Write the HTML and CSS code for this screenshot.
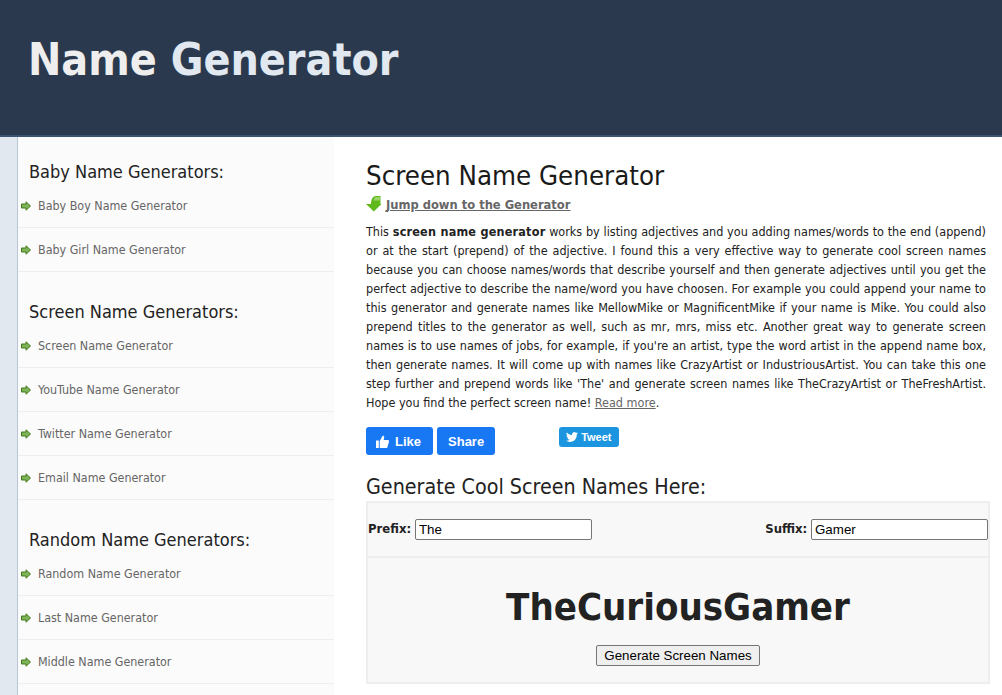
FILE: index.html
```html
<html lang="en">
<head>
	<meta charset="utf-8">
	<title>Screen Name Generator</title>
	<link rel="stylesheet" href="styles.css">
</head>
<body>
	<div class="header">
		<div class="site_title"><span class="title_first">Name</span> <span class="title_second">Generator</span></div>
	</div>
	<div class="page">
		<div class="strip"></div>
		<div class="sidebar">
			<h3>Baby Name Generators:</h3>
			<a class="side_link"><svg class="side_arrow" viewBox="0 0 10 10"><path d="M.5 3H5V.8L9.500 5 5 9.200V7H.5z"/></svg>Baby Boy Name Generator</a>
			<a class="side_link"><svg class="side_arrow" viewBox="0 0 10 10"><path d="M.5 3H5V.8L9.500 5 5 9.200V7H.5z"/></svg>Baby Girl Name Generator</a>
			<h3>Screen Name Generators:</h3>
			<a class="side_link"><svg class="side_arrow" viewBox="0 0 10 10"><path d="M.5 3H5V.8L9.500 5 5 9.200V7H.5z"/></svg>Screen Name Generator</a>
			<a class="side_link"><svg class="side_arrow" viewBox="0 0 10 10"><path d="M.5 3H5V.8L9.500 5 5 9.200V7H.5z"/></svg>YouTube Name Generator</a>
			<a class="side_link"><svg class="side_arrow" viewBox="0 0 10 10"><path d="M.5 3H5V.8L9.500 5 5 9.200V7H.5z"/></svg>Twitter Name Generator</a>
			<a class="side_link"><svg class="side_arrow" viewBox="0 0 10 10"><path d="M.5 3H5V.8L9.500 5 5 9.200V7H.5z"/></svg>Email Name Generator</a>
			<h3>Random Name Generators:</h3>
			<a class="side_link"><svg class="side_arrow" viewBox="0 0 10 10"><path d="M.5 3H5V.8L9.500 5 5 9.200V7H.5z"/></svg>Random Name Generator</a>
			<a class="side_link"><svg class="side_arrow" viewBox="0 0 10 10"><path d="M.5 3H5V.8L9.500 5 5 9.200V7H.5z"/></svg>Last Name Generator</a>
			<a class="side_link"><svg class="side_arrow" viewBox="0 0 10 10"><path d="M.5 3H5V.8L9.500 5 5 9.200V7H.5z"/></svg>Middle Name Generator</a>
		</div>
		<div class="content">
			<h1>Screen Name Generator</h1>
			<div class="jump">
				<svg class="jump_arrow" viewBox="0 0 16 16"><path class="jump_arrow_body" d="M5 8C5 3 7 0 10 0h4.500v8H15.500L7.800 15.500 0 8z"/><path class="jump_arrow_light" d="M9 1h5v3.500H7.500z"/></svg>
				<a>Jump down to the Generator</a>
			</div>
			<p class="intro">This <b>screen name generator</b> works by listing adjectives and you adding names/words to the end (append) or at the start (prepend) of the adjective. I found this a very effective way to generate cool screen names because you can choose names/words that describe yourself and then generate adjectives until you get the perfect adjective to describe the name/word you have choosen. For example you could append your name to this generator and generate names like MellowMike or MagnificentMike if your name is Mike. You could also prepend titles to the generator as well, such as mr, mrs, miss etc. Another great way to generate screen names is to use names of jobs, for example, if you're an artist, type the word artist in the append name box, then generate names. It will come up with names like CrazyArtist or IndustriousArtist. You can take this one step further and prepend words like 'The' and generate screen names like TheCrazyArtist or TheFreshArtist. Hope you find the perfect screen name! <a>Read more</a>.</p>
			<div class="social">
				<span class="fb_button fb_like"><svg class="thumb" viewBox="0 0 14 14"><path d="M0 6h3v8H0zM4 6.500 7 1c1.300-.3 2 .6 1.800 1.800L8.300 5.500H13c1 0 1.300.9 1 1.700l-1.700 5.900c-.2.600-.6.900-1.200.9H4z"/></svg>Like</span>
				<span class="fb_button">Share</span>
				<span class="tweet"><svg class="bird" viewBox="0 0 24 24"><path d="M23.950 4.570a10 10 0 0 1-2.820.77 4.960 4.960 0 0 0 2.160-2.720c-.95.550-2 .95-3.130 1.180a4.920 4.920 0 0 0-8.380 4.480C7.690 8.100 4.070 6.130 1.640 3.160a4.820 4.820 0 0 0-.67 2.480c0 1.710.87 3.210 2.190 4.090a4.900 4.900 0 0 1-2.230-.61v.06a4.920 4.920 0 0 0 3.950 4.830 5 5 0 0 1-2.210.08 4.940 4.940 0 0 0 4.600 3.420A9.870 9.870 0 0 1 0 19.540a14 14 0 0 0 7.560 2.210c9.050 0 14-7.500 14-13.980 0-.21 0-.42-.02-.63a9.940 9.940 0 0 0 2.460-2.550z"/></svg>Tweet</span>
			</div>
			<h2>Generate Cool Screen Names Here:</h2>
			<div class="generator">
				<div class="inputs_row">
					<label><b>Prefix:</b> <input type="text" value="The"></label>
					<label><b>Suffix:</b> <input type="text" value="Gamer"></label>
				</div>
				<div class="result_row">
					<div class="result">TheCuriousGamer</div>
					<button>Generate Screen Names</button>
				</div>
			</div>
		</div>
	</div>
</body>
</html>
```
FILE: styles.css
```css
html, body {
	margin: 0;
	height: 695px;
	overflow: hidden;
}

body {
	font-family: "DejaVu Sans Condensed", "DejaVu Sans", sans-serif;
	font-stretch: condensed;
	background-color: #FFFFFF;
	color: #222222;
}

.header {
	height: 135px;
	background-color: #2A394D;
	border-bottom: 2px solid #3D5470;
	display: flex;
	align-items: center;
	padding-left: 28px;
}

.site_title {
	font-size: 44.3px;
	font-weight: bold;
	margin-top: -16px;
}

.title_first {
	color: #EEEEEE;
}

.title_second {
	color: #E1E8F0;
}

.page {
	display: flex;
	align-items: flex-start;
}

.strip {
	width: 17px;
	height: 558px;
	background-color: #E1E8F0;
	border-right: 1px solid #B9C6D3;
	flex: none;
}

.sidebar {
	width: 316px;
	height: 558px;
	flex: none;
	background-color: #FBFBFB;
}

.sidebar h3 {
	font-size: 18px;
	font-weight: normal;
	line-height: 24px;
	color: #222222;
	margin: 0;
	padding: 23px 0 0 11px;
}

.sidebar h3:not(:first-child) {
	padding-top: 28px;
}

.side_link {
	display: flex;
	align-items: center;
	height: 43px;
	border-bottom: 1px solid #EEEEEE;
	font-size: 12.4px;
	color: #666666;
}

.side_arrow {
	width: 10px;
	height: 10px;
	margin: 1px 7px 0 3px;
	fill: #7FB35A;
	stroke: #3F7A17;
	stroke-width: 1;
}

.content {
	width: 620px;
	padding: 22px 0 0 32px;
}

h1 {
	font-size: 27.4px;
	font-weight: normal;
	line-height: 33px;
	color: #1A1A1A;
	margin: 0;
}

.jump {
	display: flex;
	align-items: center;
	height: 24px;
	font-size: 12.8px;
	font-weight: bold;
	color: #666666;
}

.jump a {
	text-decoration: underline;
}

.jump_arrow {
	width: 16px;
	height: 16px;
	margin: 0 4px 0 0;
}

.jump_arrow_body {
	fill: #5FB81C;
}

.jump_arrow_light {
	fill: #9AD468;
}

.intro {
	font-size: 12.5px;
	line-height: 19px;
	text-align: justify;
	margin: 6px 0 0 0;
	color: #222222;
}

.intro b {
	letter-spacing: .2px;
}

.intro a {
	color: #666666;
	text-decoration: underline;
}

.social {
	display: flex;
	align-items: flex-start;
	margin-top: 15px;
}

.fb_button {
	display: flex;
	align-items: center;
	height: 28px;
	padding: 0 11px;
	margin-right: 4px;
	background-color: #1877F2;
	color: #FFFFFF;
	border-radius: 3px;
	font-family: "Liberation Sans", sans-serif;
	font-size: 13px;
	font-weight: bold;
}

.fb_like {
	padding: 0 12px 0 10px;
}

.thumb {
	width: 13px;
	height: 13px;
	margin-right: 6px;
	fill: #FFFFFF;
}

.tweet {
	display: flex;
	align-items: center;
	height: 20px;
	padding: 0 7px;
	margin-left: 60px;
	background-color: #1B95E0;
	color: #FFFFFF;
	border-radius: 3px;
	font-family: "Liberation Sans", sans-serif;
	font-size: 11px;
	font-weight: bold;
}

.bird {
	width: 12px;
	height: 12px;
	margin-right: 3px;
	fill: #FFFFFF;
}

h2 {
	font-size: 21.3px;
	font-weight: normal;
	line-height: 28px;
	color: #222222;
	margin: 18px 0 0 0;
}

.generator {
	width: 624px;
	background-color: #EEEEEE;
	padding: 2px;
	box-sizing: border-box;
	display: flex;
	flex-direction: column;
	gap: 2px;
}

.inputs_row {
	height: 53px;
	background-color: #F8F8F8;
	display: flex;
	align-items: center;
	justify-content: space-between;
}

.inputs_row label {
	font-size: 13px;
	color: #222222;
}

.inputs_row input {
	width: 177px;
	height: 21px;
	box-sizing: border-box;
	font-family: "Liberation Sans", sans-serif;
	font-size: 13.33px;
	padding: 1px 3px;
	border: 1px solid #767676;
	border-radius: 2px;
	vertical-align: middle;
}

.result_row {
	height: 124px;
	background-color: #F8F8F8;
	text-align: center;
}

.result {
	font-size: 38px;
	font-weight: bold;
	line-height: 54px;
	color: #222222;
	padding-top: 22px;
}

.result_row button {
	font-family: "Liberation Sans", sans-serif;
	font-size: 13.33px;
	height: 21px;
	padding: 1px 7px;
	margin-top: 11px;
	background-color: #EFEFEF;
	border: 1px solid #767676;
	border-radius: 2px;
	color: #000000;
}
```
